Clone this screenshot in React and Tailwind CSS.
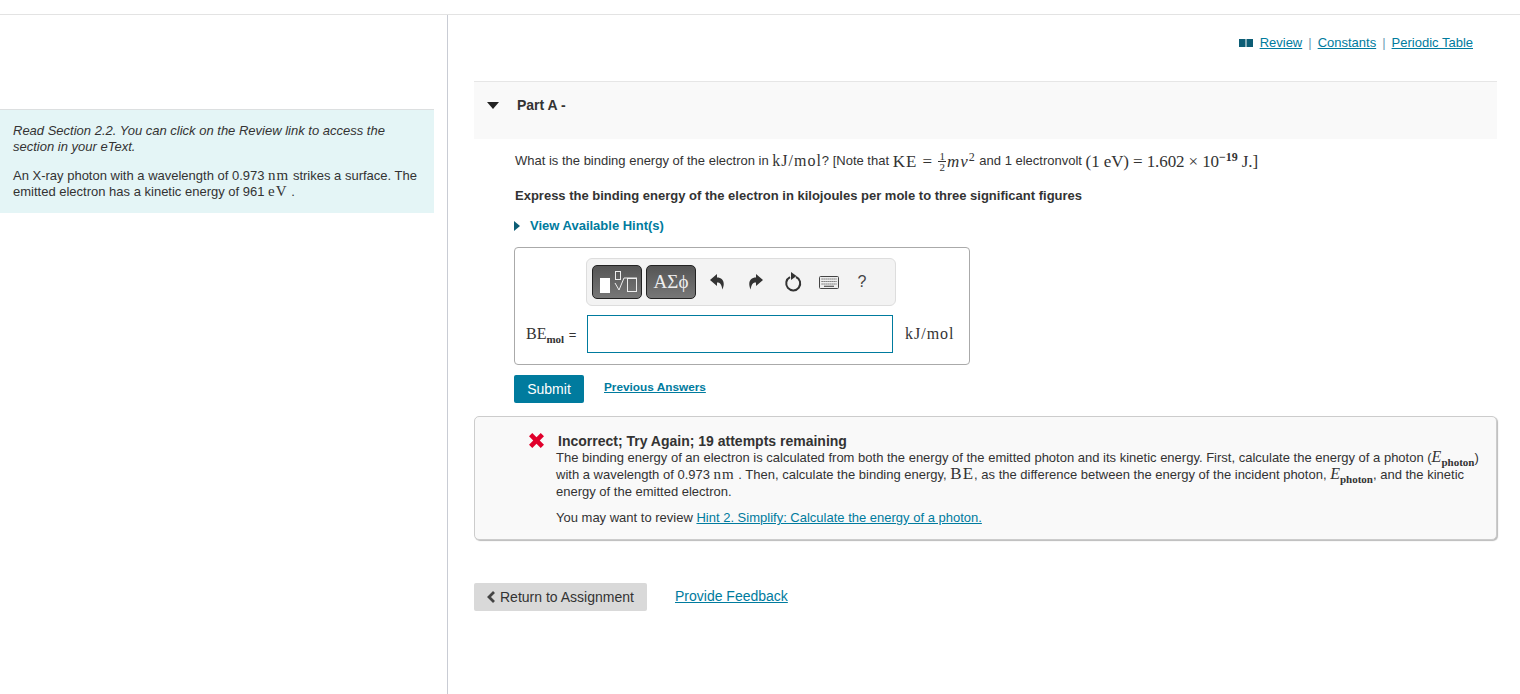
const sans = "font-['Liberation_Sans',Arial,sans-serif]";
const math = "font-['Liberation_Serif','Times_New_Roman',serif]";

function M({ children, className = "text-[16px] tracking-[1px] leading-none" }) {
  return <span className={`${math} ${className}`}>{children}</span>;
}

function Ephoton() {
  return (
    <M className="text-[16px] leading-[0]">
      <i>E</i>
      <sub className="text-[11px] font-bold align-[-1px] leading-[0]">photon</sub>
    </M>
  );
}

function ToolbarIcons() {
  return (
    <div className="flex items-center ml-[2px]">
      <span className="w-[38px] flex justify-center">
        <svg width="15" height="16" viewBox="0 0 15 16"><path d="M7 0 0 6l7 6V8.500c3 0 4.600 1.800 5.400 7C15.500 8.500 13 3.500 7 3.500z" fill="#333" /></svg>
      </span>
      <span className="w-[38px] flex justify-center">
        <svg width="15" height="16" viewBox="0 0 15 16"><path d="M8 0l7 6-7 6V8.500c-3 0-4.600 1.800-5.400 7C-.5 8.500 2 3.500 8 3.500z" fill="#333" /></svg>
      </span>
      <span className="w-[38px] flex justify-center">
        <svg width="18" height="20" viewBox="0 0 18 20" fill="none"><path d="M6 5.200a7 7 0 1 0 6-.200" stroke="#333" strokeWidth="2" /><path d="M7 0 12.500 4 7 8z" fill="#333" /></svg>
      </span>
      <span className="w-[34px] flex justify-center">
        <svg width="20" height="13" viewBox="0 0 20 13"><rect x=".5" y=".5" width="19" height="12" rx="1" fill="#eee" stroke="#444" /><path d="M2.500 3h15M2.500 5.500h15M2.500 8h15" stroke="#555" strokeWidth="1.200" strokeDasharray="1.200 .8" /><path d="M5 10.300h10" stroke="#555" strokeWidth="1.200" /></svg>
      </span>
      <span className="w-[32px] text-center text-[16px] text-[#444] leading-none">?</span>
    </div>
  );
}

export default function App() {
  return (
    <div className={`${sans} h-[694px] w-[1520px] overflow-hidden bg-white text-[13px] text-[#333] flex flex-col`}>
      <div className="h-[15px] shrink-0 border-b border-[#e3e3e3]" />
      <div className="flex flex-1">
        {/* left column */}
        <aside className="w-[448px] shrink-0 border-r border-[#c9ccd4] pt-[94px]">
          <div className="w-[434px] h-[104px] bg-[#e4f5f6] border-t border-[#dcdfe0] pl-[13px] pr-[10px] pt-[13px] leading-[16px]">
            <p className="italic">
              Read Section 2.2. You can click on the Review link to access the<br />section in your eText.
            </p>
            <p className="mt-[13px]">
              An X-ray photon with a wavelength of 0.973 <M className="text-[15px] tracking-[1px] leading-[0]">nm</M> strikes a surface. The emitted electron has a kinetic energy of 961 <M className="text-[15px] tracking-[1px] leading-[0]">eV</M> .
            </p>
          </div>
        </aside>

        {/* right column */}
        <main className="flex-1 pl-[26px] pr-[23px]">
          <div className="h-[66px] flex items-start justify-end pt-[20px] pr-[24px] leading-[16px] text-[#007b9e] whitespace-nowrap">
            <a className="underline flex items-center">
              <svg width="14" height="10" viewBox="0 0 14 10" className="mr-[7px]"><path d="M0 1h6.500v8H0zM7.500 1H14v8H7.500z" fill="#0c5d75" /></svg>
              Review
            </a>
            <span className="mx-[6px] text-[#6b9fb5]">|</span>
            <a className="underline">Constants</a>
            <span className="mx-[6px] text-[#6b9fb5]">|</span>
            <a className="underline">Periodic Table</a>
          </div>

          <div className="h-[58px] bg-[#f9f9f9] border-t border-[#e6e6e6] flex items-center pb-[10px]">
            <span className="ml-[13px] w-0 h-0 border-x-[6px] border-x-transparent border-t-[7px] border-t-[#222]" />
            <h2 className="ml-[18px] text-[14px] font-bold">Part A -</h2>
          </div>

          <div className="pl-[40px] pt-[12px]">
            <p className="ml-[1px] h-[20px] flex items-center whitespace-pre">
              What is the binding energy of the electron in <M>kJ/mol</M>? [Note that <M className="text-[17px] tracking-[1px] leading-none">KE = </M>
              <span className={`${math} inline-flex flex-col items-center text-[11px] leading-[10px] mr-[1px]`}>
                <span className="border-b border-[#333] px-[1px]">1</span>
                <span>2</span>
              </span>
              <M className="text-[17px] tracking-[1px] leading-none"><i>mv</i><sup className="text-[12px] leading-none">2</sup></M> and 1 electronvolt <M className="text-[17px] tracking-[-0.1px] leading-none">(1 eV) = 1.602 × 10<sup className="text-[12px] font-bold leading-none">−19</sup> J.]</M>
            </p>
            <p className="ml-[1px] mt-[15px] font-bold leading-[20px]">
              Express the binding energy of the electron in kilojoules per mole to three significant figures
            </p>
            <div className="mt-[10px] flex items-center font-bold text-[#007b9e] leading-[20px]">
              <span className="w-0 h-0 border-y-[5px] border-y-transparent border-l-[6px] border-l-[#0c5d75] mr-[10px]" />
              View Available Hint(s)
            </div>

            {/* answer box */}
            <div className="mt-[11px] w-[456px] h-[118px] border border-[#aaa] rounded-[4px]">
              <div className="ml-[71px] mt-[10px] w-[310px] h-[48px] bg-[#f3f3f3] border border-[#ddd] rounded-[6px] flex items-center px-[5px]">
                <div className="w-[50px] h-[34px] rounded-[5px] border border-[#222] bg-gradient-to-b from-[#555] to-[#777] flex items-center pl-[7px] gap-[4px]">
                  <span className="w-[10px] h-[15px] bg-white mt-[6px]" />
                  <svg width="24" height="24" viewBox="0 0 24 24" fill="none" stroke="#eee" strokeWidth="1"><rect x="1.500" y="1.500" width="5" height="8" /><path d="M1 13l4 7 5-12h13" /><rect x="13.500" y="8.500" width="9" height="13" /></svg>
                </div>
                <div className={`${math} ml-[4px] w-[50px] h-[34px] rounded-[5px] border border-[#222] bg-gradient-to-b from-[#555] to-[#777] text-[#eee] text-[19px] flex items-center justify-center`}>
                  AΣϕ
                </div>
                <ToolbarIcons />
              </div>
              <div className="flex items-center mt-[9px] pl-[11px]">
                <span className={`${math} w-[61px] text-[16px] whitespace-nowrap leading-none`}>
                  BE<sub className="text-[11px] font-bold align-[-2px] leading-none">mol</sub>
                  <span className={`${sans} text-[13px] ml-[1px]`}> =</span>
                </span>
                <input className="w-[306px] h-[38px] border border-[#007b9e] bg-white outline-none" />
                <M className="ml-[12px] text-[16px] tracking-[1px] leading-none">kJ/mol</M>
              </div>
            </div>

            <div className="mt-[10px] flex items-center">
              <button className="w-[70px] h-[28px] rounded-[2px] bg-[#007b9e] text-white text-[14px]">Submit</button>
              <a className="ml-[20px] text-[11.800px] font-bold text-[#007b9e] underline -mt-[3px]">Previous Answers</a>
            </div>
          </div>

          {/* feedback */}
          <div className="mt-[13px] h-[124px] bg-[#f9f9f9] border border-[#ccc] rounded-[5px] shadow-[1px_1px_1px_#bbb] flex">
            <svg width="15" height="15" viewBox="0 0 16 16" className="ml-[54px] mt-[16px] shrink-0"><path d="M0 3.500 3.500 0 8 4.500 12.500 0 16 3.500 11.500 8 16 12.500 12.500 16 8 11.500 3.500 16 0 12.500 4.500 8z" fill="#e0002b" /></svg>
            <div className="ml-[12px] pt-[16px] pr-[8px] leading-[17px]">
              <h3 className="ml-[2px] text-[14px] font-bold leading-[17px] h-[16px]">Incorrect; Try Again; 19 attempts remaining</h3>
              <p>
                The binding energy of an electron is calculated from both the energy of the emitted photon and its kinetic energy. First, calculate the energy of a photon (<Ephoton />) with a wavelength of 0.973 <M className="text-[15px] tracking-[1px] leading-[0]">nm</M> . Then, calculate the binding energy, <M className="text-[17px] tracking-[1px] leading-[0]">BE</M>, as the difference between the energy of the incident photon, <Ephoton />, and the kinetic energy of the emitted electron.
              </p>
              <p className="mt-[9px]">
                You may want to review <a className="text-[#007b9e] underline">Hint 2. Simplify: Calculate the energy of a photon.</a>
              </p>
            </div>
          </div>

          <div className="mt-[43px] flex items-center text-[14px]">
            <button className="w-[173px] h-[28px] rounded-[2px] bg-[#d9d9d9] flex items-center pl-[13px] text-[14px] text-[#333]">
              <svg width="9" height="12" viewBox="0 0 9 12" className="mr-[4px]"><path d="M7 1 2 6l5 5" fill="none" stroke="#444" strokeWidth="2.800" /></svg>
              Return to Assignment
            </button>
            <a className="ml-[28px] text-[#007b9e] underline -mt-[2px]">Provide Feedback</a>
          </div>
        </main>
      </div>
    </div>
  );
}
